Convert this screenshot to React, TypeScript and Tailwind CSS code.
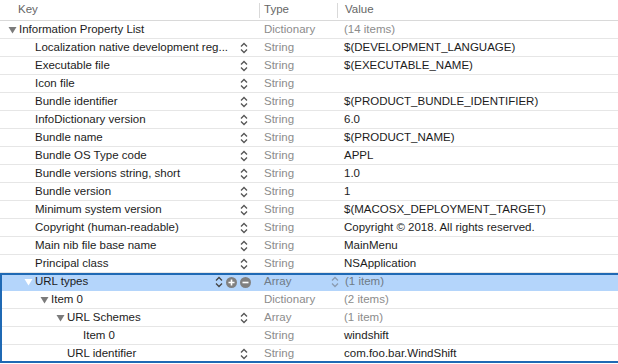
import React from 'react';

type Row = {
  key: string;
  level: number;
  type: string;
  value: string;
  open?: boolean;
  stepper?: boolean;
  muted?: boolean;
};

const rows: Row[] = [
  { key: 'Information Property List', level: 0, type: 'Dictionary', value: '(14 items)', open: true, muted: true },
  { key: 'Localization native development reg...', level: 1, type: 'String', value: '$(DEVELOPMENT_LANGUAGE)', stepper: true },
  { key: 'Executable file', level: 1, type: 'String', value: '$(EXECUTABLE_NAME)', stepper: true },
  { key: 'Icon file', level: 1, type: 'String', value: '', stepper: true },
  { key: 'Bundle identifier', level: 1, type: 'String', value: '$(PRODUCT_BUNDLE_IDENTIFIER)', stepper: true },
  { key: 'InfoDictionary version', level: 1, type: 'String', value: '6.0', stepper: true },
  { key: 'Bundle name', level: 1, type: 'String', value: '$(PRODUCT_NAME)', stepper: true },
  { key: 'Bundle OS Type code', level: 1, type: 'String', value: 'APPL', stepper: true },
  { key: 'Bundle versions string, short', level: 1, type: 'String', value: '1.0', stepper: true },
  { key: 'Bundle version', level: 1, type: 'String', value: '1', stepper: true },
  { key: 'Minimum system version', level: 1, type: 'String', value: '$(MACOSX_DEPLOYMENT_TARGET)', stepper: true },
  { key: 'Copyright (human-readable)', level: 1, type: 'String', value: 'Copyright © 2018. All rights reserved.', stepper: true },
  { key: 'Main nib file base name', level: 1, type: 'String', value: 'MainMenu', stepper: true },
  { key: 'Principal class', level: 1, type: 'String', value: 'NSApplication', stepper: true },
];

const urlRows: Row[] = [
  { key: 'Item 0', level: 2, type: 'Dictionary', value: '(2 items)', open: true, muted: true },
  { key: 'URL Schemes', level: 3, type: 'Array', value: '(1 item)', open: true, stepper: true, muted: true },
  { key: 'Item 0', level: 4, type: 'String', value: 'windshift' },
  { key: 'URL identifier', level: 3, type: 'String', value: 'com.foo.bar.WindShift', stepper: true },
];

const Stepper = ({ className = '' }: { className?: string }) => (
  <svg width="8" height="12" viewBox="0 0 8 12" className={className}>
    <path d="M1 4.5 L4 1.5 L7 4.5 M1 7.5 L4 10.5 L7 7.5" fill="none" stroke="currentColor" strokeWidth="1.3" />
  </svg>
);

const Circle = ({ minus }: { minus?: boolean }) => (
  <svg width="11" height="11" viewBox="0 0 11 11">
    <circle cx="5.5" cy="5.5" r="5.5" fill="#808080" />
    <path d={minus ? 'M2.5 5.5 H8.5' : 'M2.5 5.5 H8.5 M5.5 2.5 V8.5'} stroke="#fff" strokeWidth="1.6" />
  </svg>
);

const Triangle = ({ white }: { white?: boolean }) => (
  <svg width="9" height="8" viewBox="0 0 9 8" className="mr-[2px]">
    <path d="M0.5 1 H8.5 L4.5 7.5 Z" fill={white ? '#ffffff' : '#7b7b7b'} />
  </svg>
);

const PlistRow = ({ row }: { row: Row }) => {
  const pad = 19 + row.level * 16 - (row.open ? 11 : 0);
  return (
    <div className="flex h-[18px] items-center border-b border-[#e6e6e6]">
      <div className="flex w-[259px] items-center pr-[11px]" style={{ paddingLeft: pad }}>
        {row.open && <Triangle />}
        <span className="flex-1 truncate text-[#1c1c1c]">{row.key}</span>
        {row.stepper && <Stepper className="text-[#555]" />}
      </div>
      <div className="w-[78px] pl-[5px] text-[#8c8c8c]">{row.type}</div>
      <div className={`flex-1 pl-[7px] ${row.muted ? 'text-[#8c8c8c]' : 'text-[#1c1c1c]'}`}>{row.value}</div>
    </div>
  );
};

export default function App() {
  return (
    <div className="h-[364px] w-[618px] overflow-hidden bg-white text-[11.5px] leading-none" style={{ fontFamily: '"Liberation Sans", Arial, sans-serif' }}>
      <div className="flex h-[21px] items-center border-b border-[#d9d9d9] text-[#666]">
        <div className="w-[259px] pl-[18px]">Key</div>
        <div className="h-[15px] w-px bg-[#d9d9d9]" />
        <div className="w-[77px] pl-[4px]">Type</div>
        <div className="h-[15px] w-px bg-[#d9d9d9]" />
        <div className="flex-1 pl-[7px]">Value</div>
      </div>
      {rows.map((r, i) => (
        <PlistRow key={i} row={r} />
      ))}
      <div className="relative">
        <div className="flex h-[18px] items-center bg-[#b4d5fb]">
          <div className="flex w-[259px] items-center pr-[8px]" style={{ paddingLeft: 24 }}>
            <Triangle white />
            <span className="flex-1 text-[#1c1c1c]">URL types</span>
            <div className="flex items-center gap-[3px]">
              <Stepper className="text-[#444]" />
              <Circle />
              <Circle minus />
            </div>
          </div>
          <div className="w-[72px] pl-[5px] text-[#6f7a86]">Array</div>
          <Stepper className="text-[#8a9bb0]" />
          <div className="flex-1 pl-[6px] text-[#6f7a86]">(1 item)</div>
        </div>
        {urlRows.map((r, i) => (
          <PlistRow key={i} row={r} />
        ))}
        <div className="pointer-events-none absolute inset-0 border-b-2 border-l-2 border-t-2 border-[#1f69b4]" />
      </div>
    </div>
  );
}
